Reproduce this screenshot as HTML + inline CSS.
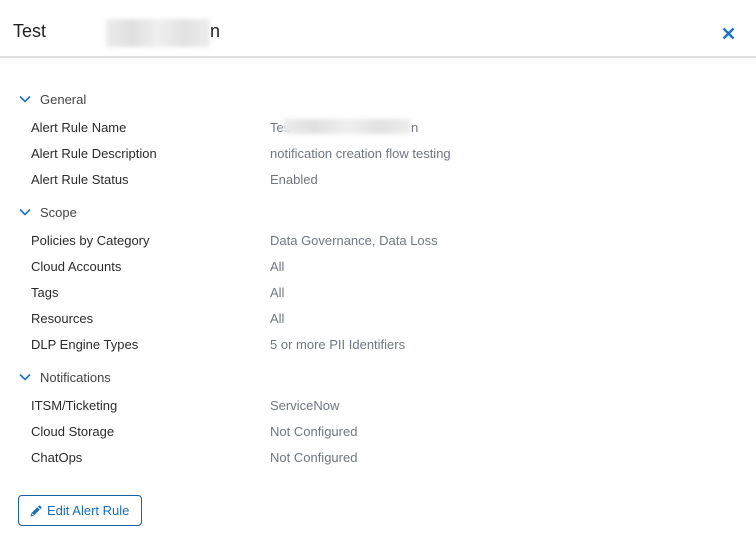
<!DOCTYPE html>
<html><head><style>
body{margin:0;width:756px;height:559px;background:#fff;font-family:"Liberation Sans",Arial,sans-serif;position:relative;overflow:hidden}
.a{position:absolute;white-space:nowrap}
.t{font-size:18px;color:#222;top:21px;left:13px}
.blur{position:absolute;background:linear-gradient(90deg,#ececec,#e0e0e0,#efefef,#e2e2e2,#ededed);filter:blur(2px)}
.l{font-size:13px;color:#2b2b2b;left:31px}
.v{font-size:13px;color:#6f7780;left:270px}
.s{font-size:13px;color:#444;left:40px}
.ch{position:absolute;left:19px;width:12px;height:8px}
</style></head><body>
<div class="a t">Test</div>
<div class="blur" style="left:106px;top:19px;width:104px;height:28px"></div>
<div class="a t" style="left:210px">n</div>
<svg class="a" style="left:722px;top:27px" width="13" height="13" viewBox="0 0 13 13"><path d="M1.5 1.5L11.5 11.5M11.5 1.5L1.5 11.5" stroke="#1a73c9" stroke-width="2.4"/></svg>
<div class="a" style="left:0;top:56px;width:756px;height:2px;background:#e1e1e1"></div>

<svg class="ch" style="top:95px" viewBox="0 0 12 8"><path d="M1 1.5L6 6.5L11 1.5" fill="none" stroke="#1a73c9" stroke-width="1.6"/></svg>
<div class="a s" style="top:92px">General</div>
<div class="a l" style="top:120px">Alert Rule Name</div><div class="a v" style="top:120px">Tes</div>
<div class="blur" style="left:283px;top:119px;width:128px;height:15px"></div>
<div class="a v" style="top:120px;left:411px">n</div>
<div class="a l" style="top:146px">Alert Rule Description</div><div class="a v" style="top:146px">notification creation flow testing</div>
<div class="a l" style="top:172px">Alert Rule Status</div><div class="a v" style="top:172px">Enabled</div>

<svg class="ch" style="top:208px" viewBox="0 0 12 8"><path d="M1 1.5L6 6.5L11 1.5" fill="none" stroke="#1a73c9" stroke-width="1.6"/></svg>
<div class="a s" style="top:205px">Scope</div>
<div class="a l" style="top:233px">Policies by Category</div><div class="a v" style="top:233px">Data Governance, Data Loss</div>
<div class="a l" style="top:259px">Cloud Accounts</div><div class="a v" style="top:259px">All</div>
<div class="a l" style="top:285px">Tags</div><div class="a v" style="top:285px">All</div>
<div class="a l" style="top:311px">Resources</div><div class="a v" style="top:311px">All</div>
<div class="a l" style="top:337px">DLP Engine Types</div><div class="a v" style="top:337px">5 or more PII Identifiers</div>

<svg class="ch" style="top:373px" viewBox="0 0 12 8"><path d="M1 1.5L6 6.5L11 1.5" fill="none" stroke="#1a73c9" stroke-width="1.6"/></svg>
<div class="a s" style="top:370px">Notifications</div>
<div class="a l" style="top:398px">ITSM/Ticketing</div><div class="a v" style="top:398px">ServiceNow</div>
<div class="a l" style="top:424px">Cloud Storage</div><div class="a v" style="top:424px">Not Configured</div>
<div class="a l" style="top:450px">ChatOps</div><div class="a v" style="top:450px">Not Configured</div>

<div class="a" style="left:18px;top:495px;width:122px;height:29px;border:1px solid #1b5f9e;border-radius:4px"></div>
<svg class="a" style="left:29px;top:504px" width="14" height="14" viewBox="0 0 14 14"><path d="M1.5 12.5L2.2 9.3L9.6 1.9Q10.4 1.1 11.2 1.9L12.1 2.8Q12.9 3.6 12.1 4.4L4.7 11.8Z" fill="#1b6fb5"/><path d="M2.8 9.6L4.4 11.2M8.6 2.9L11.1 5.4" stroke="#fff" stroke-width="0.9"/></svg>
<div class="a" style="left:47px;top:503px;font-size:13px;color:#1b6fb5">Edit Alert Rule</div>
</body></html>
